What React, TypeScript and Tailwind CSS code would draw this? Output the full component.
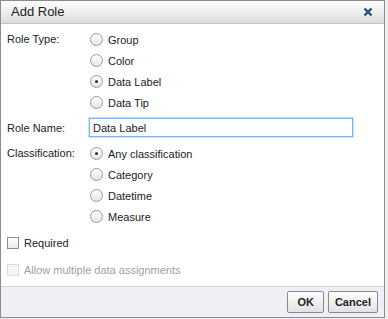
const font = { fontFamily: '"Liberation Sans", Arial, sans-serif' };

function Radio({ checked, label }: { checked?: boolean; label: string }) {
  return (
    <div className="flex h-[21px] items-center">
      <span className="flex h-[13px] w-[13px] items-center justify-center rounded-full border border-[#9a9a9a] bg-gradient-to-b from-[#ffffff] to-[#e6e6e6]">
        {checked && <span className="h-[3px] w-[3px] rounded-full bg-[#333]" />}
      </span>
      <span className="ml-[5px] text-[11px] text-[#222]">{label}</span>
    </div>
  );
}

export default function App() {
  return (
    <div className="h-[319px] w-[388px] bg-[#f0f0f0]" style={font}>
      <div className="flex h-[318px] w-[385px] flex-col border border-[#8c8c8c] bg-white">
        {/* title bar */}
        <div className="flex h-[23px] shrink-0 items-center justify-between border-b border-[#c4c4c4] bg-gradient-to-b from-[#ffffff] to-[#dcdde0] pl-[10px] pr-[11px]">
          <span className="text-[13px] text-[#222]">Add Role</span>
          <svg width="10" height="10" viewBox="0 0 10 10">
            <path d="M1.5 1.5 L8.5 8.5 M8.5 1.5 L1.5 8.5" stroke="#2a4f7a" strokeWidth="2.4" />
          </svg>
        </div>

        {/* body */}
        <div className="flex min-h-0 flex-1 flex-col px-[6px] pt-[5px] text-[11px] leading-[16px] text-[#222]">
          <div className="flex">
            <span className="w-[83px] pt-[2px]">Role Type:</span>
            <div className="flex flex-col">
              <Radio label="Group" />
              <Radio label="Color" />
              <Radio checked label="Data Label" />
              <Radio label="Data Tip" />
            </div>
          </div>

          <div className="mt-[5px] flex items-center">
            <span className="w-[82px]">Role Name:</span>
            <div className="flex h-[19px] w-[264px] items-center border border-[#7fb5e6] px-[3px] shadow-[0_0_0_1px_#cfe3f6]">
              Data Label
            </div>
          </div>

          <div className="mt-[6px] flex">
            <span className="w-[83px] pt-[2px]">Classification:</span>
            <div className="flex flex-col">
              <Radio checked label="Any classification" />
              <Radio label="Category" />
              <Radio label="Datetime" />
              <Radio label="Measure" />
            </div>
          </div>

          <div className="mt-[8px] flex items-center">
            <span className="h-[12px] w-[12px] border border-[#8c8c8c] bg-gradient-to-b from-[#ffffff] to-[#e8e8e8]" />
            <span className="ml-[5px]">Required</span>
          </div>

          <div className="mt-[11px] flex items-center text-[#a0a0a0]">
            <span className="h-[12px] w-[12px] border border-[#dcdcdc] bg-[#f6f6f6]" />
            <span className="ml-[5px]">Allow multiple data assignments</span>
          </div>
        </div>

        {/* footer */}
        <div className="flex h-[31px] shrink-0 items-center justify-end gap-[4px] border-t border-[#d0d3da] bg-[#eef0f5] pr-[6px]">
          <button className="h-[22px] rounded-[2px] border border-[#8a8a8a] bg-gradient-to-b from-[#ffffff] to-[#e2e2e2] px-[9px] text-[11px] font-bold text-[#222]">
            OK
          </button>
          <button className="h-[22px] rounded-[2px] border border-[#8a8a8a] bg-gradient-to-b from-[#ffffff] to-[#e2e2e2] px-[6px] text-[11px] font-bold text-[#222]">
            Cancel
          </button>
        </div>
      </div>
    </div>
  );
}
